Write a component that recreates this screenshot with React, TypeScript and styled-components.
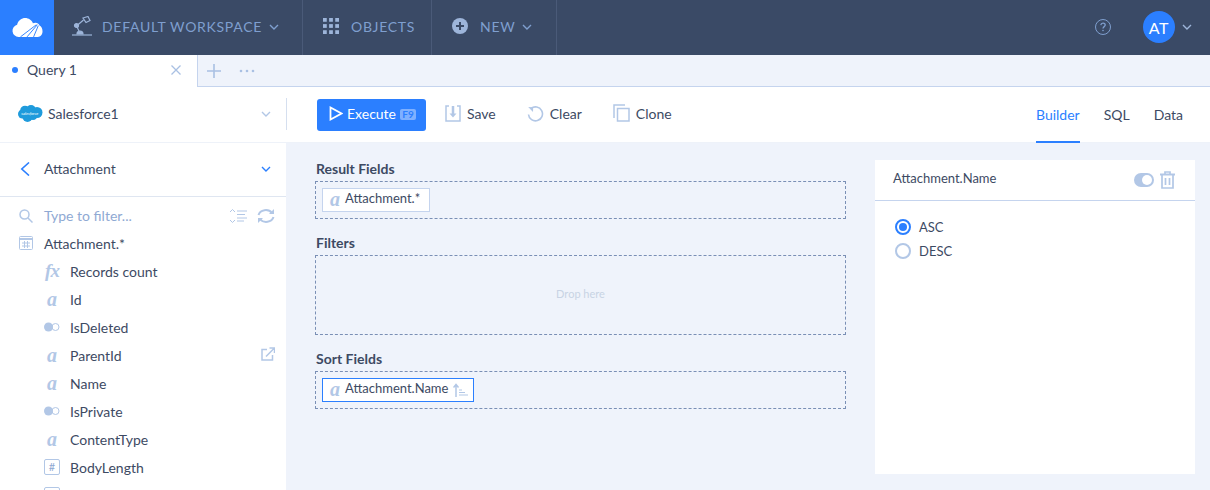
import React from "react";
import styled, { createGlobalStyle } from "styled-components";

const Global = createGlobalStyle`
  html, body { margin: 0; padding: 0; height: 490px; overflow: hidden; background: #eff3fb; }
  body { font-family: Lato, "Liberation Sans", sans-serif; font-size: 14px; color: #3d4a63; }
  #root { height: 490px; }
  * { box-sizing: border-box; }
`;

const Page = styled.div`display:flex;flex-direction:column;width:1210px;height:490px;overflow:hidden;`;
const Header = styled.header`display:flex;align-items:stretch;height:55px;background:#3a4a66;flex:none;`;
const LogoCell = styled.div`width:54px;background:#2b7fff;display:flex;align-items:center;justify-content:center;`;
const NavItem = styled.div<{ $w: number; $pad: number }>`
  width:${p => p.$w}px;padding:0 0 3px ${p => p.$pad}px;display:flex;align-items:center;border-right:1px solid #4a5a78;
  color:#7f9fcf;font-size:14px;letter-spacing:.7px;text-transform:uppercase;
`;
const NavLabel = styled.span<{ $l: number }>`margin-left:${p => p.$l}px;`;
const NavCaret = styled.span<{ $l: number }>`display:flex;margin:1px 0 0 ${p => p.$l}px;`;
const HeaderRight = styled.div`margin-left:auto;display:flex;align-items:center;padding:0 18px 1px 0;`;
const Avatar = styled.div`width:32px;height:32px;border-radius:50%;background:#2b7fff;color:#fff;font-size:16px;letter-spacing:.6px;display:flex;align-items:center;justify-content:center;margin-left:32px;margin-right:7px;`;

const TabBar = styled.div`display:flex;height:32px;flex:none;background:#eff3fb;`;
const Tab = styled.div`width:197px;background:#fff;display:flex;align-items:center;padding:0 16px 3px 12px;color:#3d4a63;font-size:14px;`;
const Dot = styled.span`width:6px;height:6px;border-radius:50%;background:#2b7fff;margin-right:9px;`;
const TabLabel = styled.span`flex:1;`;
const TabTools = styled.div`flex:1;display:flex;align-items:center;padding-left:9px;gap:18px;border-left:1px solid #c5d4ee;border-bottom:1px solid #c5d4ee;`;

const Toolbar = styled.div`display:flex;height:55px;background:#fff;flex:none;align-items:center;`;
const Source = styled.div`width:287px;height:32px;margin-top:-1px;display:flex;align-items:center;padding:0 15px 1px 17px;border-right:1px solid #d5dfef;font-size:14px;`;
const SourceLogo = styled.svg`margin-right:1px;`;
const SourceName = styled.span`margin-left:4px;flex:1;`;
const Actions = styled.div`display:flex;align-items:center;padding-left:30px;flex:1;margin-top:1px;`;
const Exec = styled.div`width:109px;height:32px;background:#2b7fff;border-radius:3px;color:#fff;display:flex;align-items:center;padding:0 0 3px 12px;font-size:14px;`;
const ExecLabel = styled.span`margin-left:4px;`;
const Key = styled.span`margin:1px 0 0 4px;background:#7fb0ff;color:#2b7fff;border-radius:2px;font-size:10px;font-weight:700;line-height:11px;height:11px;width:16px;text-align:center;`;
const Action = styled.div<{ $l: number }>`display:flex;align-items:center;margin-left:${p => p.$l}px;padding-bottom:4px;font-size:14px;gap:6px;`;
const Views = styled.div`display:flex;height:55px;padding-right:27px;gap:24px;`;
const View = styled.div<{ $active?: boolean }>`
  position:relative;z-index:1;height:56px;padding-top:19px;font-size:14px;line-height:18px;color:${p => (p.$active ? "#2b7fff" : "#3d4a63")};
  border-bottom:2px solid ${p => (p.$active ? "#2b7fff" : "transparent")};
`;

const Body = styled.div`flex:1;display:flex;min-height:0;border-top:1px solid #eef2f9;`;
const Side = styled.aside`width:286px;background:#fff;flex:none;overflow:hidden;`;
const SideHead = styled.div`height:54px;display:flex;align-items:center;padding:0 15px 1px 20px;border-bottom:1px solid #dfe6f1;font-size:14px;`;
const SideTitle = styled.span`flex:1;margin:0 0 2px 14px;`;
const Filter = styled.div`height:32px;display:flex;align-items:center;padding:5px 11px 0 19px;color:#8fa9d3;font-size:14px;`;
const FilterText = styled.span`flex:1;margin-left:11px;`;
const FilterGap = styled.span`width:10px;`;
const Row = styled.div<{ $indent?: boolean }>`position:relative;height:28px;display:flex;align-items:center;padding-left:${p => (p.$indent ? 44 : 19)}px;font-size:14px;`;
const RowName = styled.span<{ $l: number }>`margin-left:${p => p.$l}px;`;
const IconSlot = styled.span<{ $w: number }>`width:${p => p.$w}px;flex:none;display:flex;align-items:center;justify-content:center;color:#b2c7e6;`;
const ItalicA = styled.span`font-family:"Liberation Serif",serif;font-style:italic;font-weight:700;color:#b2c7e6;font-size:20px;line-height:20px;`;
const ChipA = styled(ItalicA)`margin-top:3px;`;
const Fx = styled(ItalicA)`font-size:19px;letter-spacing:-1px;`;
const Hash = styled.span`width:16px;height:16px;border:1px solid #b2c7e6;border-radius:2px;font-size:11px;line-height:14px;text-align:center;color:#8fa9d3;`;
const RowEnd = styled.span`position:absolute;right:11px;top:6px;display:flex;`;

const Main = styled.main`flex:1;display:flex;min-width:0;padding:17px 15px 0 29px;gap:29px;`;
const Fields = styled.div`width:531px;flex:none;`;
const Label = styled.div`font-weight:700;font-size:14px;line-height:18px;padding-left:1px;color:#3d4a63;`;
const Group = styled.div`margin-bottom:15px;`;
const Drop = styled.div<{ $h: number }>`
  margin-top:3px;height:${p => p.$h}px;border:1px dashed #7a8fb5;padding:6px;display:flex;align-items:flex-start;
`;
const DropHint = styled.div`width:100%;height:100%;display:flex;align-items:center;justify-content:center;padding-bottom:4px;color:#c8d3e4;font-size:11px;`;
const Chip = styled.div<{ $on?: boolean }>`
  height:24px;display:flex;align-items:center;background:#fff;padding:0 ${p => (p.$on ? 5 : 9)}px 5px 7px;font-size:13px;gap:5px;
  border:1px solid ${p => (p.$on ? "#2b7fff" : "#c5d4ee")};
`;
const SortGlyph = styled.svg`margin-top:5px;`;
const Panel = styled.section`width:320px;height:314px;background:#fff;flex:none;`;
const PanelHead = styled.div`height:41px;display:flex;align-items:center;padding:0 20px 4px 18px;border-bottom:1px solid #c5d4ee;font-size:13px;`;
const PanelTitle = styled.span`flex:1;`;
const PanelIcons = styled.span`display:flex;align-items:center;gap:6px;margin-top:4px;`;
const Options = styled.div`padding:18px 20px;display:flex;flex-direction:column;gap:8px;`;
const Option = styled.div`display:flex;align-items:center;height:16px;gap:8px;font-size:13px;`;
const Radio = styled.span<{ $on?: boolean }>`
  width:16px;height:16px;border-radius:50%;border:2px solid ${p => (p.$on ? "#2b7fff" : "#b2c7e6")};display:flex;align-items:center;justify-content:center;
  &::after{content:"";width:8px;height:8px;border-radius:50%;background:${p => (p.$on ? "#2b7fff" : "transparent")};}
`;

const Chevron = ({ c = "#7f9fcf", w = 10 }: { c?: string; w?: number }) => (
  <svg width={w} height={6} viewBox="0 0 10 6" fill="none" stroke={c} strokeWidth="1.4"><path d="M1 1l4 4 4-4" /></svg>
);
const Toggle = () => (
  <svg width={16} height={10} viewBox="0 0 16 10">
    <circle cx="11.500" cy="5" r="3.500" fill="none" stroke="#b2c7e6" />
    <circle cx="4.500" cy="5" r="4.500" fill="#b2c7e6" />
  </svg>
);

const fields: [string, string][] = [
  ["fx", "Records count"], ["a", "Id"], ["t", "IsDeleted"], ["a", "ParentId"],
  ["a", "Name"], ["t", "IsPrivate"], ["a", "ContentType"], ["#", "BodyLength"], ["box", ""],
];

export default function App() {
  return (
    <Page>
      <Global />
      <Header>
        <LogoCell>
          <svg width="32" height="21" viewBox="0 0 34 22">
            <path d="M8 21a6.500 6.500 0 0 1-1.500-12.800C7.500 3.500 11.500 1 15 1c3.800 0 7 2.300 8.300 5.500C24 6.200 25 6 26 6c2 0 3.500 1 4.300 2.800C32 9.500 33.500 12 33.500 15c0 3.500-2 6-5 6z" fill="#fff" />
            <path d="M10 21L27 8M17 21l11-13M24 21l5-12" stroke="#2b7fff" strokeWidth="1" fill="none" />
          </svg>
        </LogoCell>
        <NavItem $w={249} $pad={18}>
          <svg width="20" height="20" viewBox="0 0 20 20" fill="none" stroke="#9db5da" strokeWidth="1.200">
            <path d="M0 19h20" /><path d="M5 18c0-2 1-3 3-3s3 1 3 3z" fill="#9db5da" />
            <circle cx="4.500" cy="9.500" r="2" fill="#9db5da" /><path d="M7 15L4.500 10l7-6" /><path d="M11 2l5-1.500 2 4-4 2z" />
          </svg>
          <NavLabel $l={10}>Default Workspace</NavLabel>
          <NavCaret $l={7}><Chevron /></NavCaret>
        </NavItem>
        <NavItem $w={129} $pad={20}>
          <svg width="16" height="16" viewBox="0 0 17 17" fill="#9db5da">
            {[0, 6.5, 13].flatMap(y => [0, 6.5, 13].map(x => <rect key={`${x}-${y}`} x={x} y={y} width="4" height="4" />))}
          </svg>
          <NavLabel $l={12}>Objects</NavLabel>
        </NavItem>
        <NavItem $w={125} $pad={20}>
          <svg width="16" height="16" viewBox="0 0 16 16">
            <circle cx="8" cy="8" r="8" fill="#9db5da" />
            <path d="M8 4v8M4 8h8" stroke="#3a4a66" strokeWidth="2" />
          </svg>
          <NavLabel $l={12}>New</NavLabel>
          <NavCaret $l={7}><Chevron /></NavCaret>
        </NavItem>
        <HeaderRight>
          <svg width="16" height="16" viewBox="0 0 16 16" fill="none" stroke="#7f9fcf" strokeWidth="1">
            <circle cx="8" cy="8" r="7.500" />
            <path d="M5.800 6.200C6 4.800 7 4.200 8 4.200c1.300 0 2.200.8 2.200 1.900 0 1.600-2.200 1.500-2.200 3.400" strokeWidth="1.300" />
            <circle cx="8" cy="11.500" r=".8" fill="#7f9fcf" stroke="none" />
          </svg>
          <Avatar>AT</Avatar>
          <Chevron c="#9db5da" />
        </HeaderRight>
      </Header>

      <TabBar>
        <Tab>
          <Dot />
          <TabLabel>Query 1</TabLabel>
          <svg width="10" height="10" viewBox="0 0 10 10" stroke="#a9c0e3" strokeWidth="1.300"><path d="M.5.5l9 9M9.500.5l-9 9" /></svg>
        </Tab>
        <TabTools>
          <svg width="14" height="14" viewBox="0 0 14 14" stroke="#a9c0e3" strokeWidth="1.600"><path d="M7 0v14M0 7h14" /></svg>
          <svg width="16" height="4" viewBox="0 0 16 4" fill="#a9c0e3"><circle cx="2" cy="2" r="1.300" /><circle cx="8" cy="2" r="1.300" /><circle cx="14" cy="2" r="1.300" /></svg>
        </TabTools>
      </TabBar>

      <Toolbar>
        <Source>
          <SourceLogo width="26" height="19" viewBox="0 0 26 19">
            <g fill="#1f9bdc">
              <circle cx="8" cy="6.500" r="4.800" />
              <circle cx="14" cy="6" r="5" />
              <circle cx="20" cy="8.500" r="5.500" />
              <circle cx="5.500" cy="10" r="4.500" />
              <circle cx="10.500" cy="13" r="5" />
              <circle cx="16" cy="11.500" r="4.500" />
            </g>
            <text x="12.800" y="10.800" textAnchor="middle" fontSize="4.200" fontStyle="italic" fill="#fff" fontFamily="Lato, sans-serif">salesforce</text>
          </SourceLogo>
          <SourceName>Salesforce1</SourceName>
          <Chevron c="#b2c7e6" />
        </Source>
        <Actions>
          <Exec>
            <svg width="14" height="15" viewBox="0 0 14 15" fill="none" stroke="#fff" strokeWidth="1.800"><path d="M1.500 1.500v12l11-6z" /></svg>
            <ExecLabel>Execute</ExecLabel>
            <Key>F9</Key>
          </Exec>
          <Action $l={19}>
            <svg width="16" height="17" viewBox="0 0 16 17" fill="none" stroke="#b2c7e6" strokeWidth="1.500">
              <path d="M4 1H1v15h14V1h-3" /><path d="M8 1v9" strokeWidth="2.500" /><path d="M4.500 8.500h7L8 12.500z" fill="#b2c7e6" stroke="none" />
            </svg>
            Save
          </Action>
          <Action $l={31}>
            <svg width="17" height="17" viewBox="0 0 17 17" fill="none" stroke="#b2c7e6" strokeWidth="1.600">
              <path d="M4 3.500A7 7 0 1 1 1.500 9.500" /><path d="M1.200 2l5 .3-.2 4.700z" fill="#b2c7e6" stroke="none" />
            </svg>
            Clear
          </Action>
          <Action $l={31}>
            <svg width="17" height="18" viewBox="0 0 17 18" fill="none" stroke="#b2c7e6" strokeWidth="1.500">
              <path d="M12 1H1v13" /><path d="M4.500 4.500H16V17H4.500z" />
            </svg>
            Clone
          </Action>
        </Actions>
        <Views>
          <View $active>Builder</View>
          <View>SQL</View>
          <View>Data</View>
        </Views>
      </Toolbar>

      <Body>
        <Side>
          <SideHead>
            <svg width="10" height="14" viewBox="0 0 10 14" fill="none" stroke="#2b7fff" strokeWidth="1.600"><path d="M9 .5L1.800 7 9 13.500" /></svg>
            <SideTitle>Attachment</SideTitle>
            <Chevron c="#2b7fff" />
          </SideHead>
          <Filter>
            <svg width="14" height="14" viewBox="0 0 14 14" fill="none" stroke="#b2c7e6" strokeWidth="1.500"><circle cx="5.500" cy="5.500" r="4.500" /><path d="M9 9l4.500 4.500" /></svg>
            <FilterText>Type to filter...</FilterText>
            <svg width="18" height="16" viewBox="0 0 18 16" fill="none" stroke="#b2c7e6" strokeWidth="1">
              <path d="M8 3h10M8 6.500h8M8 10h10M8 13h7" /><path d="M1 4l2.500-2.500L6 4M1 12l2.500 2.500L6 12" />
            </svg>
            <FilterGap />
            <svg width="18" height="16" viewBox="0 0 18 16" fill="none" stroke="#b2c7e6" strokeWidth="2">
              <path d="M1.500 7A7.500 6.500 0 0 1 15 5" /><path d="M16.500 9A7.500 6.500 0 0 1 3 11" />
              <path d="M12 6l5 0 0-5z" fill="#b2c7e6" stroke="none" /><path d="M6 10l-5 0 0 5z" fill="#b2c7e6" stroke="none" />
            </svg>
          </Filter>
          <Row>
            <svg width="14" height="14" viewBox="0 0 14 14" fill="none" stroke="#b2c7e6" strokeWidth="1">
              <rect x=".5" y=".5" width="13" height="13" rx="1" /><path d="M.5 3h13" strokeWidth="2" /><path d="M3 7h8M3 10h8M5.500 5v7M8.500 5v7" />
            </svg>
            <RowName $l={11}>Attachment.*</RowName>
          </Row>
          {fields.map(([kind, name], i) => (
            <Row $indent key={i}>
              <IconSlot $w={16}>
                {kind === "fx" && <Fx>fx</Fx>}
                {kind === "a" && <ItalicA>a</ItalicA>}
                {kind === "t" && <Toggle />}
                {kind === "#" && <Hash>#</Hash>}
                {kind === "box" && <Hash />}
              </IconSlot>
              {name && <RowName $l={10}>{name}</RowName>}
              {name === "ParentId" && (
                <RowEnd>
                  <svg width="14" height="14" viewBox="0 0 14 14" fill="none" stroke="#b2c7e6" strokeWidth="1.500">
                    <path d="M6 2.500H1V13h10.500V8" /><path d="M5 9.500L13 1.500M8.500 1H13.500V6" />
                  </svg>
                </RowEnd>
              )}
            </Row>
          ))}
        </Side>
        <Main>
          <Fields>
            <Group>
              <Label>Result Fields</Label>
              <Drop $h={38}>
                <Chip><ChipA>a</ChipA>Attachment.*</Chip>
              </Drop>
            </Group>
            <Group>
              <Label>Filters</Label>
              <Drop $h={80}><DropHint>Drop here</DropHint></Drop>
            </Group>
            <Group>
              <Label>Sort Fields</Label>
              <Drop $h={38}>
                <Chip $on>
                  <ChipA>a</ChipA>Attachment.Name
                  <SortGlyph width="15" height="14" viewBox="0 0 15 14" fill="none" stroke="#b2c7e6" strokeWidth="1.200">
                    <path d="M3 14V2M.5 4.500L3 1.500l2.500 3" strokeWidth="1.500" /><path d="M6 7h3M6 9.500h6M6 12h9" />
                  </SortGlyph>
                </Chip>
              </Drop>
            </Group>
          </Fields>
          <Panel>
            <PanelHead>
              <PanelTitle>Attachment.Name</PanelTitle>
              <PanelIcons>
                <svg width="20" height="14" viewBox="0 0 20 14">
                  <rect y="0" width="20" height="14" rx="7" fill="#b2c7e6" /><circle cx="13" cy="7" r="5" fill="#fff" />
                </svg>
                <svg width="15" height="18" viewBox="0 0 15 18" fill="none" stroke="#b2c7e6" strokeWidth="1.700">
                  <path d="M0 3.500h15" strokeWidth="2" /><path d="M5 3V1h5v2" /><path d="M2 4v13h11V4" /><path d="M5.500 7v7M9.500 7v7" />
                </svg>
              </PanelIcons>
            </PanelHead>
            <Options>
              <Option><Radio $on />ASC</Option>
              <Option><Radio />DESC</Option>
            </Options>
          </Panel>
        </Main>
      </Body>
    </Page>
  );
}
